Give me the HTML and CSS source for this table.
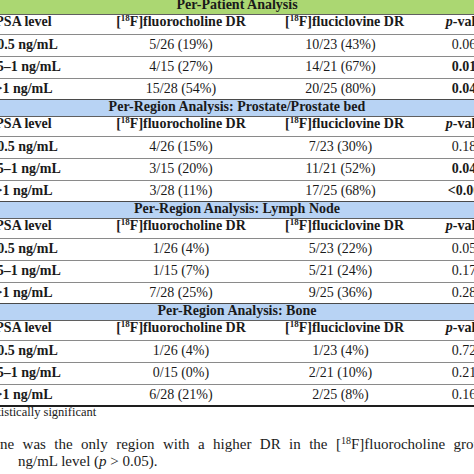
FILE: index.html
```html
<!DOCTYPE html>
<html lang="en">
<head>
<meta charset="utf-8">
<title>Detection rates by PSA level</title>
<link rel="stylesheet" href="styles.css">
</head>
<body>
<table class="results">
  <colgroup>
    <col class="c-label"><col class="c-fch"><col class="c-flu"><col class="c-p">
  </colgroup>
  <tbody>
    <tr class="sec sec-green"><th colspan="4">Per-Patient Analysis</th></tr>
    <tr class="head"><th>PSA level</th><th>[<sup>18</sup>F]fluorocholine DR</th><th>[<sup>18</sup>F]fluciclovine DR</th><th><i>p</i>-value</th></tr>
    <tr><td class="label">&lt;0.5 ng/mL</td><td>5/26 (19%)</td><td>10/23 (43%)</td><td>0.065</td></tr>
    <tr><td class="label">0.5–1 ng/mL</td><td>4/15 (27%)</td><td>14/21 (67%)</td><td class="sig">0.019</td></tr>
    <tr class="last"><td class="label">&gt;1 ng/mL</td><td>15/28 (54%)</td><td>20/25 (80%)</td><td class="sig">0.042</td></tr>

    <tr class="sec sec-blue"><th colspan="4">Per-Region Analysis: Prostate/Prostate bed</th></tr>
    <tr class="head"><th>PSA level</th><th>[<sup>18</sup>F]fluorocholine DR</th><th>[<sup>18</sup>F]fluciclovine DR</th><th><i>p</i>-value</th></tr>
    <tr><td class="label">&lt;0.5 ng/mL</td><td>4/26 (15%)</td><td>7/23 (30%)</td><td>0.186</td></tr>
    <tr><td class="label">0.5–1 ng/mL</td><td>3/15 (20%)</td><td>11/21 (52%)</td><td class="sig">0.042</td></tr>
    <tr class="last"><td class="label">&gt;1 ng/mL</td><td>3/28 (11%)</td><td>17/25 (68%)</td><td class="sig">&lt;0.001</td></tr>

    <tr class="sec sec-blue"><th colspan="4">Per-Region Analysis: Lymph Node</th></tr>
    <tr class="head"><th>PSA level</th><th>[<sup>18</sup>F]fluorocholine DR</th><th>[<sup>18</sup>F]fluciclovine DR</th><th><i>p</i>-value</th></tr>
    <tr><td class="label">&lt;0.5 ng/mL</td><td>1/26 (4%)</td><td>5/23 (22%)</td><td>0.052</td></tr>
    <tr><td class="label">0.5–1 ng/mL</td><td>1/15 (7%)</td><td>5/21 (24%)</td><td>0.174</td></tr>
    <tr class="last"><td class="label">&gt;1 ng/mL</td><td>7/28 (25%)</td><td>9/25 (36%)</td><td>0.286</td></tr>

    <tr class="sec sec-blue"><th colspan="4">Per-Region Analysis: Bone</th></tr>
    <tr class="head"><th>PSA level</th><th>[<sup>18</sup>F]fluorocholine DR</th><th>[<sup>18</sup>F]fluciclovine DR</th><th><i>p</i>-value</th></tr>
    <tr><td class="label">&lt;0.5 ng/mL</td><td>1/26 (4%)</td><td>1/23 (4%)</td><td>0.727</td></tr>
    <tr><td class="label">0.5–1 ng/mL</td><td>0/15 (0%)</td><td>2/21 (10%)</td><td>0.213</td></tr>
    <tr class="last final"><td class="label">&gt;1 ng/mL</td><td>6/28 (21%)</td><td>2/25 (8%)</td><td>0.165</td></tr>
  </tbody>
</table>
<p class="note">* Statistically significant</p>
<div class="para">
  <div class="para-line1">Bone was the only region with a higher DR in the [<sup>18</sup>F]fluorocholine group</div>
  <div class="para-line2">ng/mL level (<i>p</i> &gt; 0.05).</div>
</div>
</body>
</html>
```
FILE: styles.css
```css
html, body {
  margin: 0;
  padding: 0;
}
body {
  width: 474px;
  height: 474px;
  overflow: hidden;
  background: #ffffff;
  color: #1a1a1a;
  font-family: "Liberation Serif", "Times New Roman", serif;
}

.results {
  margin: -2px 0 0 -30px;
  width: 569px;
  table-layout: fixed;
  border-collapse: separate;
  border-spacing: 0;
  font-size: 14px;
  line-height: 14px;
}
.c-label { width: 107px; }
.c-fch { width: 208px; }
.c-flu { width: 111px; }
.c-p { width: 143px; }

.results td,
.results th {
  padding: 3px 0 4px;
  text-align: center;
  white-space: nowrap;
  font-weight: normal;
  border-bottom: 1px solid #8a8a8a;
}
.results sup {
  font-size: 9px;
  line-height: 0;
  vertical-align: 5px;
}

.sec th {
  padding: 0 35px 2px 0;
  font-weight: bold;
  border-bottom-color: #5f5f5f;
}
.sec-green th { background: #abd772; }
.sec-blue th { background: #b8d3f4; }

.head th {
  padding: 0 0 5px;
  font-weight: bold;
}
.results .label { font-weight: bold; }
.results .sig { font-weight: bold; }

.last td {
  padding: 3px 0 3px;
  border-bottom-color: #4a4a4a;
}
.final td {
  border-bottom: 2px solid #1e1e1e;
}

.note {
  margin: -1px 0 0 -28px;
  font-size: 12.5px;
  line-height: 13px;
}

.para {
  margin-top: 17px;
  font-size: 15px;
  line-height: 17px;
}
.para sup {
  font-size: 10px;
  line-height: 0;
  vertical-align: 5px;
}
.para-line1 {
  margin-left: -17.5px;
  width: 506px;
  text-align: justify;
  text-align-last: justify;
}
.para-line2 {
  margin-left: 18px;
}
```
